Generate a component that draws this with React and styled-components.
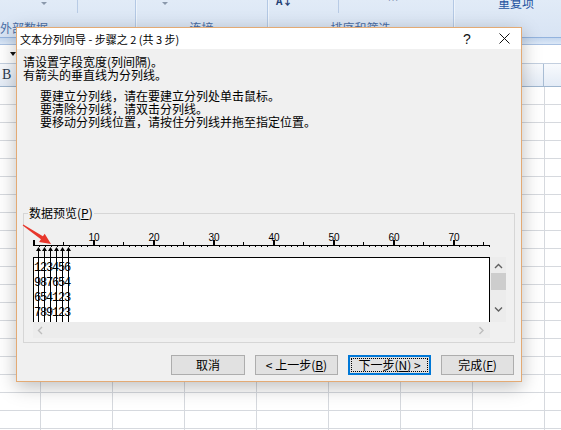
import React from "react";
import styled, { createGlobalStyle } from "styled-components";

const CJK = `"Noto Sans CJK SC", "Microsoft YaHei", sans-serif`;

const GlobalStyle = createGlobalStyle`
  html, body { margin: 0; padding: 0; background: #fff; }
  body { font-family: ${CJK}; overflow: hidden; }
`;

const Screen = styled.div`
  position: relative;
  width: 561px;
  height: 430px;
  overflow: hidden;
  display: flex;
  flex-direction: column;
  background: #fff;
`;

/* ---------- excel behind the dialog ---------- */

const Ribbon = styled.div`
  flex: none;
  height: 45px;
  display: flex;
  flex-direction: column;
  background: linear-gradient(#e1ebf7, #d6e2f3);
`;

const RibbonGroups = styled.div`
  display: flex;
  height: 37px;
`;

const RibbonGroup = styled.div`
  flex: ${p => (p.$w ? `0 0 ${p.$w}px` : "1")};
  display: flex;
  flex-direction: column;
  border-right: ${p => (p.$last ? "none" : "1px solid #b3c8e4")};
  box-shadow: ${p => (p.$last ? "none" : "1px 0 0 #eef4fb")};
`;

const Tools = styled.div`
  height: 17px;
  display: flex;
  align-items: flex-start;
`;

const DropMark = styled.span`
  margin-left: ${p => p.$at}px;
  margin-top: 2px;
  width: 0;
  height: 0;
  border-left: 3px solid transparent;
  border-right: 3px solid transparent;
  border-top: 3px solid #8a98ab;
`;

const ToolSep = styled.span`
  margin-left: ${p => p.$at}px;
  width: 1px;
  height: 13px;
  background: #b8cbe5;
`;

const ToolText = styled.span`
  margin-left: ${p => p.$at}px;
  margin-top: ${p => p.$top || -3}px;
  font-size: ${p => p.$size || 12}px;
  line-height: 12px;
  color: ${p => p.$color || "#1f3f73"};
  font-weight: ${p => (p.$bold ? 700 : 400)};
  white-space: nowrap;
`;

const GroupLabel = styled.div`
  flex: 1;
  display: flex;
  align-items: center;
  justify-content: ${p => (p.$left ? "flex-start" : "center")};
  font-size: 12px;
  color: #4a6ea5;
  white-space: nowrap;
  overflow: hidden;
`;

const RibbonFoot = styled.div`
  flex: 1;
  border-top: 1px solid #93b3de;
  background: linear-gradient(#c4d7ef, #dbe7f6);
  border-bottom: 1px solid #a9c1e2;
`;

const FormulaBar = styled.div`
  flex: none;
  height: 18px;
  display: flex;
  align-items: center;
  background: #fff;
  border-bottom: 1px solid #c3cfdf;
`;

const NameArrow = styled.span`
  margin-left: 10px;
  width: 0;
  height: 0;
  border-left: 3.5px solid transparent;
  border-right: 3.5px solid transparent;
  border-top: 4px solid #111;
`;

const HeaderRow = styled.div`
  flex: none;
  height: 22px;
  display: flex;
  background: linear-gradient(#f8fafd, #e3ebf6);
  border-bottom: 1px solid #9fb6cf;
`;

const HeaderCell = styled.div`
  flex: 0 0 ${p => p.$w}px;
  box-sizing: border-box;
  border-right: 1px solid #a9bdd4;
  display: flex;
  align-items: center;
  padding-left: 2px;
  font-family: "Liberation Serif", serif;
  font-size: 14px;
  color: #2b3a4d;
`;

const Grid = styled.div`
  flex: 1;
  background-color: #fff;
  background-image:
    linear-gradient(to right, transparent 71px, #d6d9de 71px),
    linear-gradient(to bottom, transparent 17px, #d6d9de 17px);
  background-size: 72px 100%, 100% 18px;
  background-position: 41px 0, 0 0;
`;

/* ---------- dialog ---------- */

const Dialog = styled.div`
  position: absolute;
  left: 16px;
  top: 27px;
  width: 506px;
  height: 355px;
  box-sizing: border-box;
  border: 1px solid #e3aa74;
  background: #f0f0f0;
  box-shadow: 0 5px 18px rgba(0, 0, 0, 0.26);
  display: flex;
  flex-direction: column;
`;

const TitleBar = styled.div`
  flex: none;
  height: 21px;
  display: flex;
  align-items: center;
  padding-left: 3px;
  background: #fff;
  font-size: 11px;
  color: #000;
`;

const TitleText = styled.span`
  flex: 1;
  white-space: nowrap;
`;

const CaptionButton = styled.span`
  width: 30px;
  height: 21px;
  display: flex;
  align-items: center;
  justify-content: center;
  margin-right: ${p => p.$mr || 0}px;
  font-family: "Liberation Sans", sans-serif;
  font-size: 14px;
  color: #111;
`;

const Body = styled.div`
  flex: 1;
  padding: 6px 6px 0 6px;
  display: flex;
  flex-direction: column;
  font-size: 12px;
  color: #000;
`;

const Lead = styled.p`
  margin: 0;
  line-height: 13px;
`;

const Hints = styled.p`
  margin: 8px 0 0 17px;
  line-height: 13px;
`;

const GroupBox = styled.div`
  position: relative;
  margin-top: 85px;
  height: 130px;
  box-sizing: border-box;
  border: 1px solid #d6d6d6;
  padding: 15px 0 0 9px;
`;

const Legend = styled.span`
  position: absolute;
  left: 4px;
  top: -8px;
  padding: 0 1px;
  background: #f0f0f0;
  line-height: 14px;
`;

const Frame = styled.div`
  display: flex;
  height: 81px;
`;

const FrameMain = styled.div`
  display: flex;
  flex-direction: column;
`;

const TextPane = styled.div`
  position: relative;
  width: 457px;
  height: 65px;
  box-sizing: border-box;
  border: 1px solid #000;
  border-bottom: none;
  background: #fff;
  padding-top: 3px;
  overflow: hidden;
  font-family: "Liberation Mono", monospace;
  font-size: 12px;
  letter-spacing: -1.2px;
  line-height: 15px;
  color: #000;
`;

const DataRow = styled.div`
  white-space: pre;
`;

const SplitOverlay = styled.svg`
  position: absolute;
  left: 0;
  top: 0;
`;

const HScroll = styled.div`
  height: 16px;
  width: 457px;
  background: #ececec;
  display: flex;
  align-items: center;
  justify-content: space-between;
  padding: 0 5px 0 4px;
  box-sizing: border-box;
`;

const VScroll = styled.div`
  width: 16px;
  height: 81px;
  display: flex;
  flex-direction: column;
  align-items: center;
  background: #f0f0f0;
`;

const VTrack = styled.div`
  width: 16px;
  height: 65px;
  display: flex;
  flex-direction: column;
  align-items: center;
  background: #ececec;
`;

const ArrowSlot = styled.div`
  display: flex;
  margin-top: ${p => p.$top}px;
`;

const Thumb = styled.div`
  width: 15px;
  height: 17px;
  margin: 3px 0 0 1px;
  background: #cdcdcd;
`;

const ButtonRow = styled.div`
  display: flex;
  justify-content: flex-end;
  gap: 10px;
  margin-top: 12px;
  padding-right: 1px;
`;

const Button = styled.button`
  position: relative;
  width: ${p => p.$w}px;
  height: 20px;
  box-sizing: border-box;
  padding: 0;
  border: 1px solid ${p => (p.$primary ? "#0078d7" : "#adadad")};
  box-shadow: ${p => (p.$primary ? "inset 0 0 0 1px #0078d7" : "none")};
  background: #e1e1e1;
  font-family: ${CJK};
  font-size: 12px;
  line-height: 18px;
  color: #000;

  &::after {
    content: "";
    display: ${p => (p.$primary ? "block" : "none")};
    position: absolute;
    inset: 2px;
    border: 1px dotted #000;
  }
`;

const RedArrowSvg = styled.svg`
  position: absolute;
  left: 20px;
  top: 222px;
`;

const COLS = [72, 72, 72, 72, 72, 72, 72];

function Ruler() {
  const marks = [];
  for (let k = 0; k <= 76; k++) {
    const x = 6 * k;
    if (k % 10 === 0) marks.push(<rect key={k} x={x} y={11} width={2} height={6} />);
    else if (k % 5 === 0) marks.push(<rect key={k} x={x} y={13} width={1} height={4} />);
    else marks.push(<rect key={k} x={x} y={17} width={1} height={1} />);
  }
  const labels = [10, 20, 30, 40, 50, 60, 70];
  const splits = [1, 2, 3, 4, 5, 6];
  return (
    <svg width="470" height="28" style={{ display: "block" }}>
      <g fill="#000">
        <rect x="0" y="16" width="457" height="1" />
        {marks}
        {labels.map(n => (
          <text key={n} x={n * 6 + 1} y="12" textAnchor="middle"
            fontFamily="Liberation Sans, sans-serif" fontSize="10">{n}</text>
        ))}
        {splits.map(k => {
          const cx = 6 * k - 1;
          return (
            <g key={k}>
              <polygon points={`${cx - 2},22 ${cx + 3},22 ${cx + 0.5},18`} />
              <rect x={cx} y={21} width={1} height={7} />
            </g>
          );
        })}
      </g>
    </svg>
  );
}

function Chevron({ dir, color }) {
  const d = {
    up: "M1 5 L4.5 1.5 L8 5",
    down: "M1 1.5 L4.5 5 L8 1.5",
    left: "M5 1 L1.5 4.5 L5 8",
    right: "M1.5 1 L5 4.5 L1.5 8",
  }[dir];
  const vertical = dir === "up" || dir === "down";
  return (
    <svg width={vertical ? 9 : 7} height={vertical ? 7 : 9}>
      <path d={d} fill="none" stroke={color} strokeWidth="1.4" />
    </svg>
  );
}

export default function App() {
  const rows = ["123456", "987654", "654123", "789123"];
  return (
    <>
      <GlobalStyle />
      <Screen>
        <Ribbon>
          <RibbonGroups>
            <RibbonGroup $w={135}>
              <Tools>
                <DropMark $at={41} />
                <ToolSep $at={30} />
              </Tools>
              <GroupLabel $left>外部数据</GroupLabel>
            </RibbonGroup>
            <RibbonGroup $w={131}>
              <Tools>
                <DropMark $at={26} />
              </Tools>
              <GroupLabel>连接</GroupLabel>
            </RibbonGroup>
            <RibbonGroup $w={185}>
              <Tools>
                <ToolText $at={8} $size={10} $bold $top={-5}>A↓</ToolText>
                <ToolSep $at={46} />
                <ToolText $at={48} $size={11} $top={-7}>…</ToolText>
              </Tools>
              <GroupLabel>排序和筛选</GroupLabel>
            </RibbonGroup>
            <RibbonGroup $last>
              <Tools>
                <ToolText $at={44} $color="#2452a0">重复项</ToolText>
              </Tools>
              <GroupLabel />
            </RibbonGroup>
          </RibbonGroups>
          <RibbonFoot />
        </Ribbon>
        <FormulaBar>
          <NameArrow />
        </FormulaBar>
        <HeaderRow>
          <HeaderCell $w={40}>B</HeaderCell>
          {COLS.map((w, i) => (
            <HeaderCell key={i} $w={w} />
          ))}
        </HeaderRow>
        <Grid />

        <Dialog>
          <TitleBar>
            <TitleText>文本分列向导 - 步骤之 2 (共 3 步)</TitleText>
            <CaptionButton $mr={7}>?</CaptionButton>
            <CaptionButton $mr={2}>
              <svg width="11" height="11">
                <path d="M0.5 0.5 L10.5 10.5 M10.5 0.5 L0.5 10.5" stroke="#111" strokeWidth="1" />
              </svg>
            </CaptionButton>
          </TitleBar>
          <Body>
            <Lead>
              请设置字段宽度(列间隔)。<br />
              有箭头的垂直线为分列线。
            </Lead>
            <Hints>
              要建立分列线，请在要建立分列处单击鼠标。<br />
              要清除分列线，请双击分列线。<br />
              要移动分列线位置，请按住分列线并拖至指定位置。
            </Hints>
            <GroupBox>
              <Legend>数据预览(<u>P</u>)</Legend>
              <Ruler />
              <Frame>
                <FrameMain>
                  <TextPane>
                    {rows.map(r => (
                      <DataRow key={r}>{r}</DataRow>
                    ))}
                    <SplitOverlay width="60" height="64">
                      {[1, 2, 3, 4, 5, 6].map(k => (
                        <rect key={k} x={6 * k - 2} y="0" width="1" height="64" fill="#000" />
                      ))}
                    </SplitOverlay>
                  </TextPane>
                  <HScroll>
                    <Chevron dir="left" color="#bdbdbd" />
                    <Chevron dir="right" color="#bdbdbd" />
                  </HScroll>
                </FrameMain>
                <VScroll>
                  <VTrack>
                    <ArrowSlot $top={6}><Chevron dir="up" color="#606060" /></ArrowSlot>
                    <Thumb />
                    <ArrowSlot $top={16}><Chevron dir="down" color="#606060" /></ArrowSlot>
                  </VTrack>
                </VScroll>
              </Frame>
            </GroupBox>
            <ButtonRow>
              <Button $w={74}>取消</Button>
              <Button $w={83}>&lt; 上一步(<u>B</u>)</Button>
              <Button $w={83} $primary>下一步(<u>N</u>) &gt;</Button>
              <Button $w={73}>完成(<u>F</u>)</Button>
            </ButtonRow>
          </Body>
        </Dialog>

        <RedArrowSvg width="36" height="26">
          <polygon
            points="2.7,3.4 20.9,17.3 19.1,19.9 31,22 24.7,11.7 22.9,14.3 3.3,2.6"
            fill="#e8372c"
          />
        </RedArrowSvg>
      </Screen>
    </>
  );
}
